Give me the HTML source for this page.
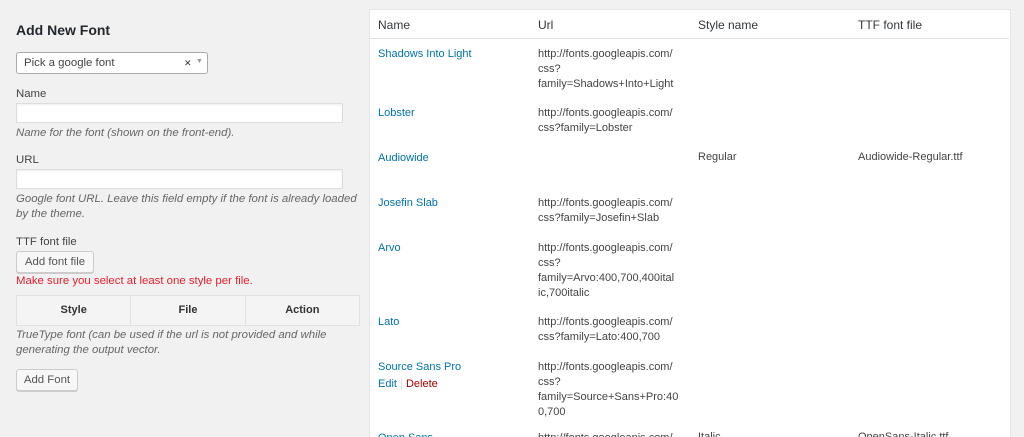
<html style="height:437px;overflow:hidden"><head><style>
body{margin:0;width:1024px;height:437px;background:#f1f1f1;font-family:"Liberation Sans",sans-serif;font-size:11px;color:#444;position:relative;overflow:hidden}
.a{position:absolute;white-space:nowrap}
.lf{font-size:11.4px}
.in{position:absolute;background:#fff;border:1px solid #ddd;box-shadow:inset 0 1px 2px rgba(0,0,0,.07)}
.btn{position:absolute;background:#f7f7f7;border:1px solid #ccc;border-radius:3px;box-shadow:0 1px 0 #ccc;color:#555;font-size:11.4px;text-align:center;box-sizing:border-box}
.d{color:#666;font-style:italic}
.l{color:#0073aa}
#t{position:absolute;left:369px;top:9px;width:640px;height:440px;background:#fff;border:1px solid #e5e5e5}
</style></head><body>
<div class="a" style="left:16px;top:22px;font-size:14px;font-weight:bold;color:#23282d">Add New Font</div>
<div class="in" style="left:16px;top:52px;width:190px;height:20px;border-color:#aaa;border-radius:3px;box-shadow:none"></div>
<div class="a lf" style="left:24px;top:57px;color:#444">Pick a google font</div>
<div class="a" style="left:184px;top:58px;font-size:9px;color:#333">✕</div>
<div class="a" style="left:196px;top:58px;font-size:7px;color:#999">▼</div>
<div class="a lf" style="left:16px;top:88px">Name</div>
<div class="in" style="left:16px;top:103px;width:325px;height:18px"></div>
<div class="a d lf" style="left:16px;top:127px">Name for the font (shown on the front-end).</div>
<div class="a lf" style="left:16px;top:154px">URL</div>
<div class="in" style="left:16px;top:169px;width:325px;height:18px"></div>
<div class="a d lf" style="left:16px;top:193px">Google font URL. Leave this field empty if the font is already loaded</div>
<div class="a d lf" style="left:16px;top:208px">by the theme.</div>
<div class="a lf" style="left:16px;top:236px">TTF font file</div>
<div class="btn" style="left:16px;top:251px;width:78px;height:22px;line-height:20px">Add font file</div>
<div class="a lf" style="left:16px;top:275px;color:#e2202e">Make sure you select at least one style per file.</div>
<div style="position:absolute;left:16px;top:295px;width:342px;height:29px;border:1px solid #e1e1e1;background:#f4f4f4;display:flex;font-weight:bold;color:#333">
<div style="flex:1;text-align:center;line-height:29px;border-right:1px solid #e1e1e1">Style</div>
<div style="flex:1;text-align:center;line-height:29px;border-right:1px solid #e1e1e1">File</div>
<div style="flex:1;text-align:center;line-height:29px">Action</div></div>
<div class="a d lf" style="left:16px;top:329px">TrueType font (can be used if the url is not provided and while</div>
<div class="a d lf" style="left:16px;top:344px">generating the output vector.</div>
<div class="btn" style="left:16px;top:369px;width:62px;height:22px;line-height:20px">Add Font</div>
<div id="t"></div>
<div style="position:absolute;left:370px;top:38px;width:639px;height:1px;background:#e1e1e1"></div>
<div class="a" style="left:378px;top:18px;color:#32373c;font-size:12px">Name</div>
<div class="a" style="left:538px;top:18px;color:#32373c;font-size:12px">Url</div>
<div class="a" style="left:698px;top:18px;color:#32373c;font-size:12px">Style name</div>
<div class="a" style="left:858px;top:18px;color:#32373c;font-size:12px">TTF font file</div>
<div style="position:absolute;left:378px;top:47px;line-height:15px">
<div class="a l" style="top:0">Shadows Into Light</div>
<div class="a l" style="top:59px">Lobster</div>
<div class="a l" style="top:104px">Audiowide</div>
<div class="a l" style="top:149px">Josefin Slab</div>
<div class="a l" style="top:194px">Arvo</div>
<div class="a l" style="top:268px">Lato</div>
<div class="a l" style="top:313px">Source Sans Pro</div>
<div class="a" style="top:330px"><span class="l">Edit</span> <span style="color:#ddd">|</span> <span style="color:#a00">Delete</span></div>
<div class="a l" style="top:384px">Open Sans</div>
</div>
<div style="position:absolute;left:538px;top:47px;line-height:15px">
<div class="a" style="top:0">http://fonts.googleapis.com/<br>css?<br>family=Shadows+Into+Light</div>
<div class="a" style="top:59px">http://fonts.googleapis.com/<br>css?family=Lobster</div>
<div class="a" style="top:149px">http://fonts.googleapis.com/<br>css?family=Josefin+Slab</div>
<div class="a" style="top:194px">http://fonts.googleapis.com/<br>css?<br>family=Arvo:400,700,400ital<br>ic,700italic</div>
<div class="a" style="top:268px">http://fonts.googleapis.com/<br>css?family=Lato:400,700</div>
<div class="a" style="top:313px">http://fonts.googleapis.com/<br>css?<br>family=Source+Sans+Pro:40<br>0,700</div>
<div class="a" style="top:384px">http://fonts.googleapis.com/</div>
</div>
<div class="a" style="left:698px;top:151px">Regular</div>
<div class="a" style="left:858px;top:151px">Audiowide-Regular.ttf</div>
<div class="a" style="left:698px;top:431px">Italic</div>
<div class="a" style="left:858px;top:431px">OpenSans-Italic.ttf</div>
</body></html>
